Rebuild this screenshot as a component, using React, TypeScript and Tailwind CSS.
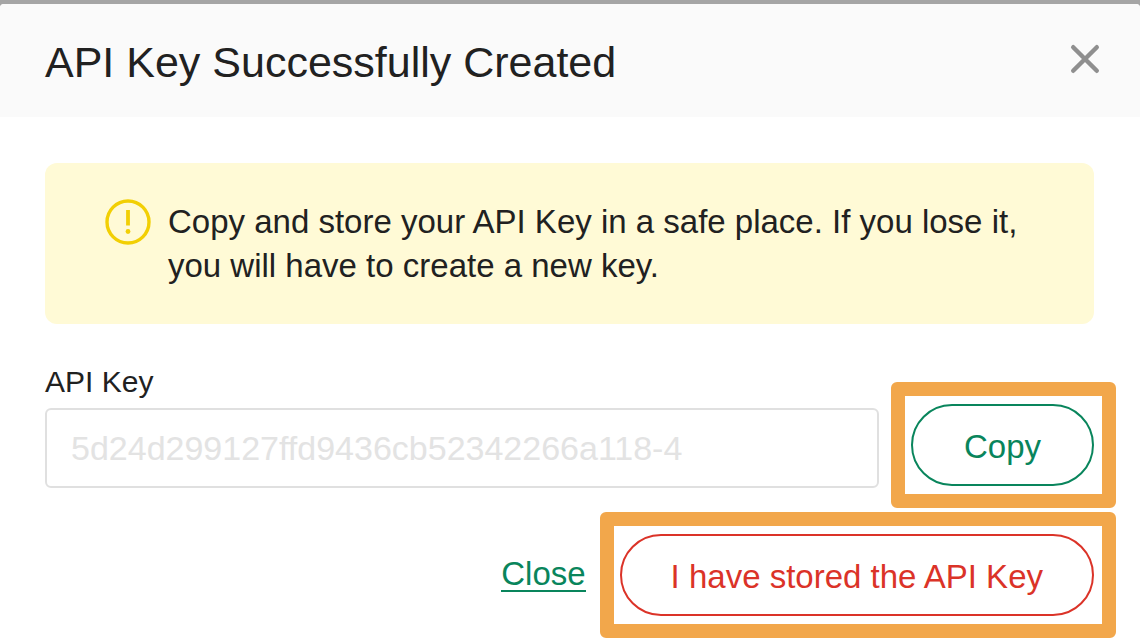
import { useId, useState } from "react";

const API_KEY = "5d24d299127ffd9436cb52342266a118-4";

function CloseIcon() {
  return (
    <svg width="30" height="30" viewBox="0 0 30 30" fill="none" stroke="#8f8f8f" strokeWidth="4.4" strokeLinecap="round">
      <path d="M3.2 3.2 26.8 26.8M26.8 3.2 3.2 26.8" />
    </svg>
  );
}

function WarningIcon() {
  return (
    <svg className="shrink-0" width="46" height="46" viewBox="0 0 46 46" fill="none">
      <circle cx="23" cy="23" r="21" stroke="#f2cf04" strokeWidth="3.4" />
      <path d="M23 11v15.5" stroke="#f2cf04" strokeWidth="3.8" />
      <circle cx="23" cy="32.5" r="2.4" fill="#f2cf04" />
    </svg>
  );
}

// Orange frame that calls out the button inside it
function Highlight({ children }: { children: React.ReactNode }) {
  return (
    <div className="relative shrink-0">
      {children}
      <span className="pointer-events-none absolute -inset-x-5 -inset-y-[22px] -right-[22px] rounded-md border-14 border-[#f2a74b]" />
    </div>
  );
}

export default function App() {
  const [open, setOpen] = useState(true);
  const keyId = useId();

  if (!open) return null;

  const close = () => setOpen(false);

  return (
    <div className="min-h-screen bg-[#a5a5a5] pt-1 font-['Liberation_Sans',Arial,sans-serif] text-[#212121]">
      <div role="dialog" aria-label="API Key Successfully Created" className="min-h-[calc(100vh-4px)] overflow-hidden rounded-t-sm bg-white">
        <header className="flex items-start justify-between bg-[#fafafa] pt-8 pr-10 pb-7 pl-[45px]">
          <h1 className="text-[43px] leading-[53px]">API Key Successfully Created</h1>
          <button type="button" aria-label="Close dialog" onClick={close} className="mt-2 cursor-pointer">
            <CloseIcon />
          </button>
        </header>

        <main className="pt-[46px] pr-[46px] pb-7 pl-[45px]">
          <div role="alert" className="flex items-start gap-[17px] rounded-xl bg-[#fffad6] py-9 pr-10 pl-[60px]">
            <WarningIcon />
            <p className="pt-px text-[33px] leading-11">
              Copy and store your API Key in a safe place. If you lose it,{" "}
              <br />
              you will have to create a new key.
            </p>
          </div>

          <label htmlFor={keyId} className="mt-10 block text-[30px] leading-9">
            API Key
          </label>
          <div className="mt-1 flex items-start gap-8">
            <input
              id={keyId}
              readOnly
              value={API_KEY}
              className="mt-1 h-20 min-w-0 flex-1 rounded-md border-2 border-[#e0e0e0] bg-white px-6 text-[34px] text-[#e3e3e3] outline-none"
            />
            <Highlight>
              <button
                type="button"
                onClick={() => navigator.clipboard?.writeText(API_KEY)}
                className="h-[82px] cursor-pointer rounded-full border-2 border-[#09855c] px-[51px] pt-1 text-[33px] text-[#09855c]"
              >
                Copy
              </button>
            </Highlight>
          </div>

          <div className="mt-[46px] flex items-center justify-end gap-[34px]">
            <a href="#" onClick={close} className="border-b-2 border-[#09855c] text-[33px] leading-8 text-[#09855c]">
              Close
            </a>
            <Highlight>
              <button
                type="button"
                onClick={close}
                className="h-[82px] cursor-pointer rounded-full border-2 border-[#db3328] px-[49px] pt-1 text-[33px] text-[#db3328]"
              >
                I have stored the API Key
              </button>
            </Highlight>
          </div>
        </main>
      </div>
    </div>
  );
}
